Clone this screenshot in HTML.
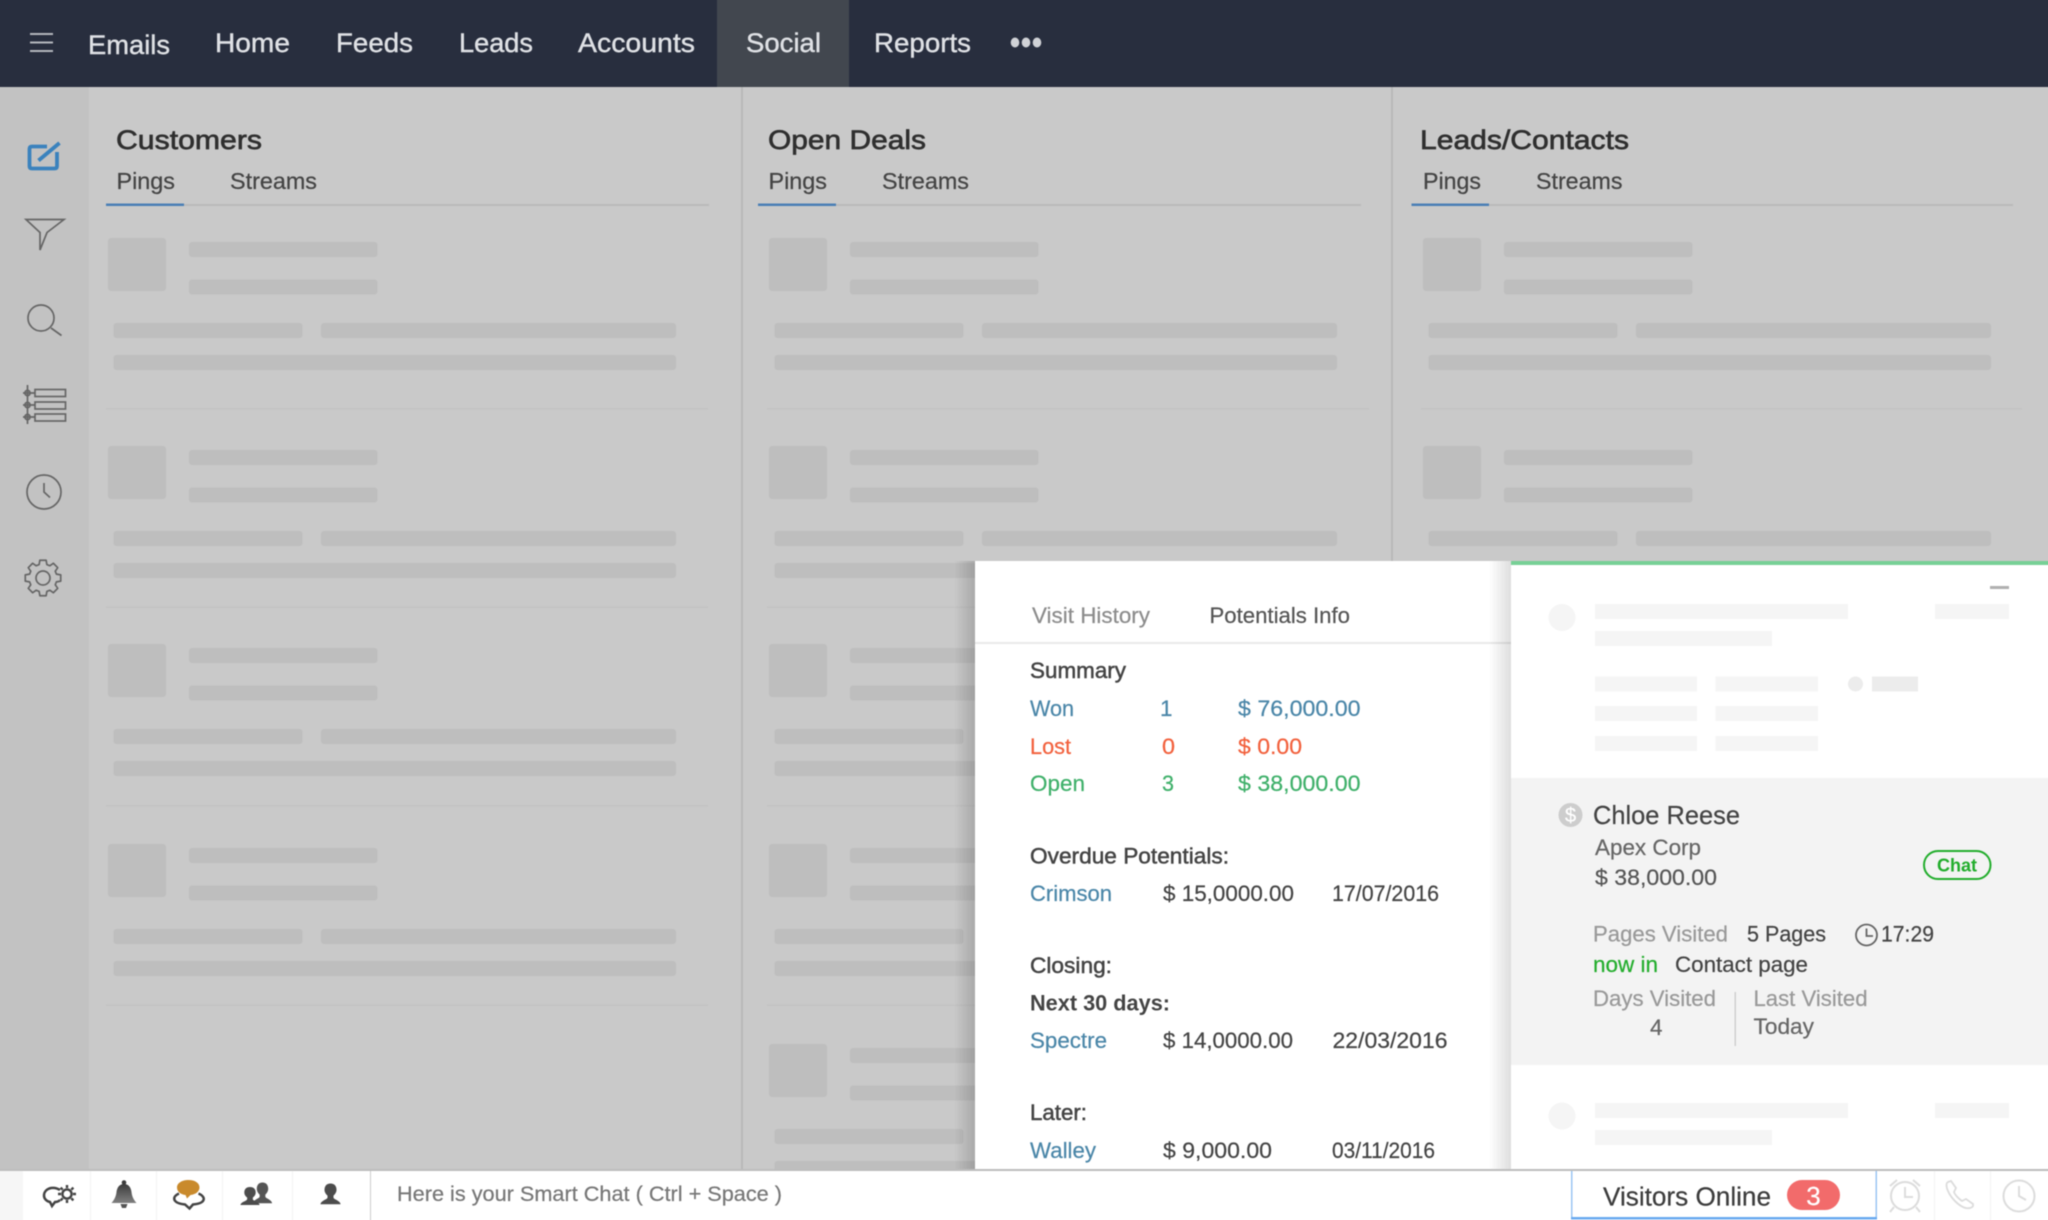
<!DOCTYPE html>
<html lang="en"><head><meta charset="utf-8"><title>Social</title>
<style>
html,body{margin:0;padding:0;width:2048px;height:1220px;overflow:hidden;background:#fff;position:relative}
svg{display:block;position:absolute;left:-10px;top:-10px;filter:blur(.45px)}
text{font-family:"Liberation Sans",sans-serif;white-space:pre;fill:currentColor;stroke:currentColor;stroke-width:.22px}
.nav{font-size:27px;color:#dfe1e5;stroke-width:.4px}
.ttl{font-size:27px;color:#2f2f2f;stroke-width:.65px}
.tab{font-size:23px;color:#444}
.p{font-size:22.5px;color:#444}
.h{font-size:22.5px;color:#444;stroke-width:.5px}
.blue{color:#4a86a8}.red{color:#f2603c}.green{color:#3fb06a}
.mut{color:#999}.mid{color:#666}.grn{color:#22ad2c}
.ico{fill:none;stroke:#666;stroke-width:1.7}
.rico{fill:none;stroke:#dcdcdc;stroke-width:2}
</style></head>
<body>
<svg width="2068" height="1240" viewBox="-10 -10 2068 1240" xmlns="http://www.w3.org/2000/svg">
<defs>
<linearGradient id="shL" x1="0" x2="1" y1="0" y2="0"><stop offset="0" stop-color="#000" stop-opacity="0"/><stop offset="1" stop-color="#000" stop-opacity=".16"/></linearGradient>
<linearGradient id="shR" x1="0" x2="1" y1="0" y2="0"><stop offset="0" stop-color="#000" stop-opacity="0"/><stop offset="1" stop-color="#000" stop-opacity=".13"/></linearGradient>
<linearGradient id="bell" x1="0" x2="0" y1="0" y2="1"><stop offset="0" stop-color="#3c3c3c"/><stop offset="1" stop-color="#808080"/></linearGradient>
<g id="card" fill="#bebebe">
<rect width="58" height="53" rx="3"/>
<rect x="81" y="4" width="188.500" height="15" rx="3"/>
<rect x="81" y="41.500" width="188.500" height="15" rx="3"/>
<rect x="5.500" y="85" width="189" height="15" rx="3"/>
<rect x="213" y="85" width="355" height="15" rx="3"/>
<rect x="5.500" y="117" width="562.500" height="15" rx="3"/>
</g>
<path id="person" d="M10 0C14 0 16 3 16 7C16 10 14.500 12 13 13.500V16C14 18 19 19 20 22.500V23H0V22.500C1 19 6 18 7 16V13.500C5.500 12 4 10 4 7C4 3 6 0 10 0Z"/>
</defs>

<!-- page -->
<rect x="-10" y="-10" width="2068" height="1240" fill="#c9c9c9"/>
<rect x="-10" y="87" width="99" height="1083" fill="#c2c2c2"/>
<rect x="741" y="87" width="2" height="1083" fill="#b9b9b9"/>
<rect x="1391" y="87" width="2" height="1083" fill="#b9b9b9"/>

<!-- nav -->
<rect x="-10" y="-10" width="2068" height="97" fill="#282e3e"/>
<rect x="717" y="-10" width="132" height="97" fill="#42474f"/>
<g fill="#b4b7bd"><rect x="30" y="33" width="23" height="2"/><rect x="30" y="41.500" width="23" height="2"/><rect x="30" y="50" width="23" height="2"/></g>
<text class="nav" x="88" y="54" textLength="82" lengthAdjust="spacingAndGlyphs">Emails</text>
<text class="nav" x="215" y="52" textLength="75" lengthAdjust="spacingAndGlyphs">Home</text>
<text class="nav" x="336" y="52" textLength="77" lengthAdjust="spacingAndGlyphs">Feeds</text>
<text class="nav" x="459" y="52" textLength="74" lengthAdjust="spacingAndGlyphs">Leads</text>
<text class="nav" x="578" y="52" textLength="117" lengthAdjust="spacingAndGlyphs">Accounts</text>
<text class="nav" x="746" y="52" textLength="75" lengthAdjust="spacingAndGlyphs">Social</text>
<text class="nav" x="874" y="52" textLength="97" lengthAdjust="spacingAndGlyphs">Reports</text>
<g fill="#d0d2d6"><ellipse cx="1015" cy="42.500" rx="4.300" ry="5"/><ellipse cx="1026" cy="42.500" rx="4.300" ry="5"/><ellipse cx="1037" cy="42.500" rx="4.300" ry="5"/></g>

<!-- sidebar icons -->
<path d="M47 146.500H32Q29.500 146.500 29.500 149V166Q29.500 168.500 32 168.500H54.500Q57 168.500 57 166V152" fill="none" stroke="#3a82bd" stroke-width="3.800"/>
<path d="M38.500 160.500L59.500 143" fill="none" stroke="#3a82bd" stroke-width="3.800"/>
<path class="ico" d="M26 219.500H64L47 232.500L40 250V232.500Z"/>
<circle class="ico" cx="41" cy="318" r="13"/><path class="ico" d="M51 328L61.500 335.500"/>
<g class="ico"><rect x="35" y="389.500" width="30.500" height="7"/><rect x="35" y="402" width="30.500" height="7"/><rect x="35" y="414" width="30.500" height="7"/><path d="M27.500 385V424M23 393H35M23 405H35M23 417H35"/><circle cx="27.500" cy="393" r="2.600"/><circle cx="27.500" cy="405" r="2.600"/><circle cx="27.500" cy="417" r="2.600"/></g>
<circle class="ico" cx="44" cy="492" r="17"/><path class="ico" d="M44 483V492L50 497.500"/>
<g class="ico" transform="translate(43 578)"><polygon stroke-linejoin="round" points="-3.86,-13.46 -3.13,-17.73 3.13,-17.73 3.86,-13.46 6.79,-12.24 10.32,-14.74 14.74,-10.32 12.24,-6.79 13.46,-3.86 17.73,-3.13 17.73,3.13 13.46,3.86 12.24,6.79 14.74,10.32 10.32,14.74 6.79,12.24 3.86,13.46 3.13,17.73 -3.13,17.73 -3.86,13.46 -6.79,12.24 -10.32,14.74 -14.74,10.32 -12.24,6.79 -13.46,3.86 -17.73,3.13 -17.73,-3.13 -13.46,-3.86 -12.24,-6.79 -14.74,-10.32 -10.32,-14.74 -6.79,-12.24"/><circle r="7"/></g>

<!-- column headers -->
<text class="ttl" x="116" y="149" textLength="146" lengthAdjust="spacingAndGlyphs">Customers</text>
<text class="tab" x="116.500" y="189" textLength="58.500" lengthAdjust="spacingAndGlyphs">Pings</text>
<text class="tab" x="230" y="189" textLength="87" lengthAdjust="spacingAndGlyphs">Streams</text>
<rect x="106" y="204" width="603" height="2" fill="#bababa"/><rect x="106" y="203.500" width="78" height="2.500" fill="#4a7fb5"/>

<text class="ttl" x="768" y="149" textLength="158" lengthAdjust="spacingAndGlyphs">Open Deals</text>
<text class="tab" x="768.500" y="189" textLength="58.500" lengthAdjust="spacingAndGlyphs">Pings</text>
<text class="tab" x="882" y="189" textLength="87" lengthAdjust="spacingAndGlyphs">Streams</text>
<rect x="758" y="204" width="603" height="2" fill="#bababa"/><rect x="758" y="203.500" width="78" height="2.500" fill="#4a7fb5"/>

<text class="ttl" x="1420" y="149" textLength="209" lengthAdjust="spacingAndGlyphs">Leads/Contacts</text>
<text class="tab" x="1423" y="189" textLength="58" lengthAdjust="spacingAndGlyphs">Pings</text>
<text class="tab" x="1536" y="189" textLength="86.500" lengthAdjust="spacingAndGlyphs">Streams</text>
<rect x="1411.500" y="204" width="601.500" height="2" fill="#bababa"/><rect x="1411.500" y="203.500" width="77.500" height="2.500" fill="#4a7fb5"/>

<!-- skeleton cards -->
<use href="#card" x="108" y="238"/><use href="#card" x="108" y="446"/><use href="#card" x="108" y="644"/><use href="#card" x="108" y="844"/>
<use href="#card" x="769" y="238"/><use href="#card" x="769" y="446"/><use href="#card" x="769" y="644"/><use href="#card" x="769" y="844"/><use href="#card" x="769" y="1044"/>
<use href="#card" x="1423" y="238"/><use href="#card" x="1423" y="446"/>
<g fill="#c3c3c3">
<rect x="106" y="408" width="602" height="1.500"/><rect x="106" y="606.500" width="602" height="1.500"/><rect x="106" y="805" width="602" height="1.500"/><rect x="106" y="1004.500" width="602" height="1.500"/>
<rect x="767" y="408" width="602" height="1.500"/><rect x="767" y="606.500" width="602" height="1.500"/><rect x="767" y="805" width="602" height="1.500"/><rect x="767" y="1004.500" width="602" height="1.500"/>
<rect x="1421" y="408" width="601" height="1.500"/>
</g>

<!-- popup left -->
<rect x="954" y="561" width="21" height="609" fill="url(#shL)"/>
<rect x="975" y="561" width="536" height="609" fill="#fff"/>
<rect x="975" y="642" width="536" height="2" fill="#e9e9e9"/>
<rect x="1489" y="561" width="22" height="609" fill="url(#shR)"/>
<text class="p" x="1032" y="623" style="color:#8c8c8c" textLength="118" lengthAdjust="spacingAndGlyphs">Visit History</text>
<text class="p" x="1209.500" y="623" style="color:#555" textLength="140.500" lengthAdjust="spacingAndGlyphs">Potentials Info</text>

<text class="h" x="1030" y="678" textLength="96" lengthAdjust="spacingAndGlyphs">Summary</text>
<text class="p blue" x="1030" y="716" textLength="44" lengthAdjust="spacingAndGlyphs">Won</text>
<text class="p blue" x="1160" y="716">1</text>
<text class="p blue" x="1238" y="716" textLength="122.500" lengthAdjust="spacingAndGlyphs">$ 76,000.00</text>
<text class="p red" x="1030" y="754" textLength="41" lengthAdjust="spacingAndGlyphs">Lost</text>
<text class="p red" x="1162" y="754" textLength="13" lengthAdjust="spacingAndGlyphs">0</text>
<text class="p red" x="1238" y="754" textLength="64" lengthAdjust="spacingAndGlyphs">$ 0.00</text>
<text class="p green" x="1030" y="791" textLength="55" lengthAdjust="spacingAndGlyphs">Open</text>
<text class="p green" x="1162" y="791" textLength="12" lengthAdjust="spacingAndGlyphs">3</text>
<text class="p green" x="1238" y="791" textLength="122.500" lengthAdjust="spacingAndGlyphs">$ 38,000.00</text>

<text class="h" x="1030" y="863.500" textLength="199" lengthAdjust="spacingAndGlyphs">Overdue Potentials:</text>
<text class="p blue" x="1030" y="901" textLength="82" lengthAdjust="spacingAndGlyphs">Crimson</text>
<text class="p" x="1163" y="901" textLength="131" lengthAdjust="spacingAndGlyphs">$ 15,0000.00</text>
<text class="p" x="1332" y="901" textLength="107" lengthAdjust="spacingAndGlyphs">17/07/2016</text>

<text class="h" x="1030" y="973" textLength="82" lengthAdjust="spacingAndGlyphs">Closing:</text>
<text class="p" x="1030" y="1010.500" textLength="140" lengthAdjust="spacingAndGlyphs" style="font-weight:700;stroke-width:0">Next 30 days:</text>
<text class="p blue" x="1030" y="1048" textLength="77" lengthAdjust="spacingAndGlyphs">Spectre</text>
<text class="p" x="1163" y="1048" textLength="130" lengthAdjust="spacingAndGlyphs">$ 14,0000.00</text>
<text class="p" x="1332.500" y="1048" textLength="115" lengthAdjust="spacingAndGlyphs">22/03/2016</text>

<text class="h" x="1030" y="1120" textLength="57" lengthAdjust="spacingAndGlyphs">Later:</text>
<text class="p blue" x="1030" y="1158" textLength="66" lengthAdjust="spacingAndGlyphs">Walley</text>
<text class="p" x="1163" y="1158" textLength="109" lengthAdjust="spacingAndGlyphs">$ 9,000.00</text>
<text class="p" x="1332" y="1158" textLength="103" lengthAdjust="spacingAndGlyphs">03/11/2016</text>

<!-- popup right -->
<rect x="1511" y="561" width="547" height="609" fill="#fff"/>
<rect x="1511" y="561" width="547" height="4" fill="#77d096"/>
<rect x="1990" y="586" width="19" height="3" fill="#b0b0b0"/>
<g fill="#f5f5f5">
<circle cx="1562" cy="617.500" r="13.500"/>
<rect x="1595" y="604" width="253" height="15"/><rect x="1935" y="604" width="74" height="15"/>
<rect x="1595" y="631" width="177" height="15"/>
<rect x="1595" y="676.500" width="102" height="15"/><rect x="1715.500" y="676.500" width="102.500" height="15"/>
<rect x="1595" y="706" width="102" height="15"/><rect x="1715.500" y="706" width="102.500" height="15"/>
<rect x="1595" y="736" width="102" height="15"/><rect x="1715.500" y="736" width="102.500" height="15"/>
<circle cx="1562" cy="1116" r="13.500"/>
<rect x="1595" y="1103" width="253" height="15"/><rect x="1935" y="1103" width="74" height="15"/>
<rect x="1595" y="1130" width="177" height="15"/>
</g>
<circle cx="1855.500" cy="684" r="7.500" fill="#ececec"/><rect x="1872" y="676.500" width="46" height="15" fill="#ececec"/>

<rect x="1511" y="778" width="547" height="287" fill="#f3f3f3"/>
<circle cx="1570.500" cy="815" r="12" fill="#cdcdcd"/>
<text x="1570.500" y="822" text-anchor="middle" style="font-size:20px;color:#fff">$</text>
<text x="1593" y="824" style="font-size:26px;color:#444" textLength="147" lengthAdjust="spacingAndGlyphs">Chloe Reese</text>
<text class="p" x="1595" y="855" style="color:#666" textLength="106" lengthAdjust="spacingAndGlyphs">Apex Corp</text>
<text class="p" x="1595" y="885" style="color:#555" textLength="122" lengthAdjust="spacingAndGlyphs">$ 38,000.00</text>
<rect x="1924" y="851" width="66.500" height="28" rx="14" fill="none" stroke="#22ad2c" stroke-width="2"/>
<text x="1937" y="871.500" style="font-size:18px;font-weight:700;color:#22ad2c;stroke-width:0" textLength="40" lengthAdjust="spacingAndGlyphs">Chat</text>
<text class="p mut" x="1593" y="941.500" textLength="135" lengthAdjust="spacingAndGlyphs">Pages Visited</text>
<text class="p" x="1747" y="941.500" textLength="79" lengthAdjust="spacingAndGlyphs">5 Pages</text>
<circle cx="1866.500" cy="935" r="10.500" fill="none" stroke="#666" stroke-width="1.800"/><path d="M1866.500 928.500V936H1873" fill="none" stroke="#666" stroke-width="1.800"/>
<text class="p" x="1881" y="941.500" textLength="53" lengthAdjust="spacingAndGlyphs">17:29</text>
<text class="p grn" x="1593" y="972" textLength="65" lengthAdjust="spacingAndGlyphs">now in</text>
<text class="p" x="1675" y="972" textLength="133" lengthAdjust="spacingAndGlyphs">Contact page</text>
<text class="p mut" x="1593" y="1006" textLength="123" lengthAdjust="spacingAndGlyphs">Days Visited</text>
<text class="p mut" x="1753.500" y="1006" textLength="114" lengthAdjust="spacingAndGlyphs">Last Visited</text>
<text class="p mid" x="1650" y="1035">4</text>
<text class="p mid" x="1753.500" y="1034" textLength="60.500" lengthAdjust="spacingAndGlyphs">Today</text>
<rect x="1734.500" y="992" width="1.500" height="54" fill="#cfcfcf"/>

<!-- bottom bar -->
<rect x="-10" y="1170" width="2068" height="60" fill="#fff"/>
<rect x="-10" y="1169" width="2068" height="2" fill="#bdbdbd"/>
<rect x="-10" y="1171" width="33" height="59" fill="#f6f6f6"/>
<g fill="#f3f3f3"><rect x="90" y="1171" width="1" height="59"/><rect x="156" y="1171" width="1" height="59"/><rect x="222" y="1171" width="1" height="59"/><rect x="292" y="1171" width="1" height="59"/></g>
<rect x="370" y="1171" width="1" height="59" fill="#cdcdcd"/>

<!-- bar icons -->
<path d="M60 1190C57 1188 54 1187.500 51 1188C46.500 1189 44 1192 44 1195.500C44 1199 47 1201.500 50 1202L52 1206L55 1202C57 1202 59 1201 60 1200" fill="none" stroke="#444" stroke-width="2.500"/>
<g transform="translate(67 1194)" stroke="#444" fill="none"><circle r="4.600" stroke-width="2.400"/><path stroke-width="2.400" d="M0 -9V-6M0 9V6M-9 0H-6M9 0H6M-6.400 -6.400L-4.300 -4.300M6.400 6.400L4.300 4.300M-6.400 6.400L-4.300 4.300M6.400 -6.400L4.300 -4.300"/></g>
<circle cx="124" cy="1182.500" r="2.300" fill="#3c3c3c"/>
<path d="M124 1184C129 1184 131 1188 131.500 1192C132 1197 134 1200 136.500 1203H111.500C114 1200 116 1197 116.500 1192C117 1188 119 1184 124 1184Z" fill="url(#bell)"/>
<path d="M120.500 1204H127.500L126 1208H122Z" fill="#555"/>
<path d="M179 1193.500C175.500 1195 173.500 1197.500 174.500 1200C176 1203 180 1204 185 1204.500L189.500 1208.500L193 1204.500C198 1204 202.500 1203 203.500 1200C204.500 1197.500 202 1195 198.500 1193.500" fill="none" stroke="#444" stroke-width="2.500"/>
<path d="M188.500 1180C195 1180 199.500 1183 199.500 1187.500C199.500 1191.500 195.500 1194.500 190.500 1195L187 1198.500L185.500 1195C180.500 1194.500 177 1191.500 177 1187.500C177 1183 182 1180 188.500 1180Z" fill="#c98a2c"/>
<g fill="#4c4c4c">
<use href="#person" transform="translate(253 1182.500) scale(.95 .9)" opacity=".95"/>
<use href="#person" transform="translate(240.500 1187) scale(.95 .78)"/>
<use href="#person" transform="translate(320.500 1183.500) scale(1 .9)"/>
</g>
<text x="397" y="1201" style="font-size:21.500px;color:#777" textLength="385" lengthAdjust="spacingAndGlyphs">Here is your Smart Chat ( Ctrl + Space )</text>

<!-- visitors online -->
<rect x="1572" y="1171" width="305" height="47" fill="#fff"/>
<rect x="1571" y="1171" width="1.500" height="47" fill="#9cc6f3"/><rect x="1875.500" y="1171" width="1.500" height="47" fill="#9cc6f3"/>
<rect x="1571" y="1217" width="306" height="2.500" fill="#6aaaf0"/>
<text x="1603" y="1205.500" style="font-size:25.500px;color:#3c3c3c" textLength="168" lengthAdjust="spacingAndGlyphs">Visitors Online</text>
<rect x="1787" y="1180" width="53" height="30" rx="15" fill="#f26b6b"/>
<text x="1813.500" y="1205" text-anchor="middle" style="font-size:26px;color:#fff">3</text>

<g fill="#f3f3f3"><rect x="1934" y="1171" width="1" height="59"/><rect x="1990" y="1171" width="1" height="59"/></g>
<g class="rico">
<circle cx="1905" cy="1196" r="14"/><path d="M1905 1187V1197H1913M1890 1186L1897 1180M1920 1186L1913 1180M1894 1207L1890 1212M1916 1207L1920 1212"/>
<path d="M1948 1182C1946 1183 1946 1187 1948 1191C1951 1198 1958 1205 1964 1207.500C1968 1209 1972 1208 1973 1206L1973 1204L1966 1199L1962 1201C1959 1199 1955 1195 1954 1192L1956 1188L1951 1181Z" stroke-width="1.800"/>
<circle cx="2019" cy="1196" r="15.500"/><path d="M2019 1186V1196L2026 1200"/>
</g>
</svg>
</body></html>
